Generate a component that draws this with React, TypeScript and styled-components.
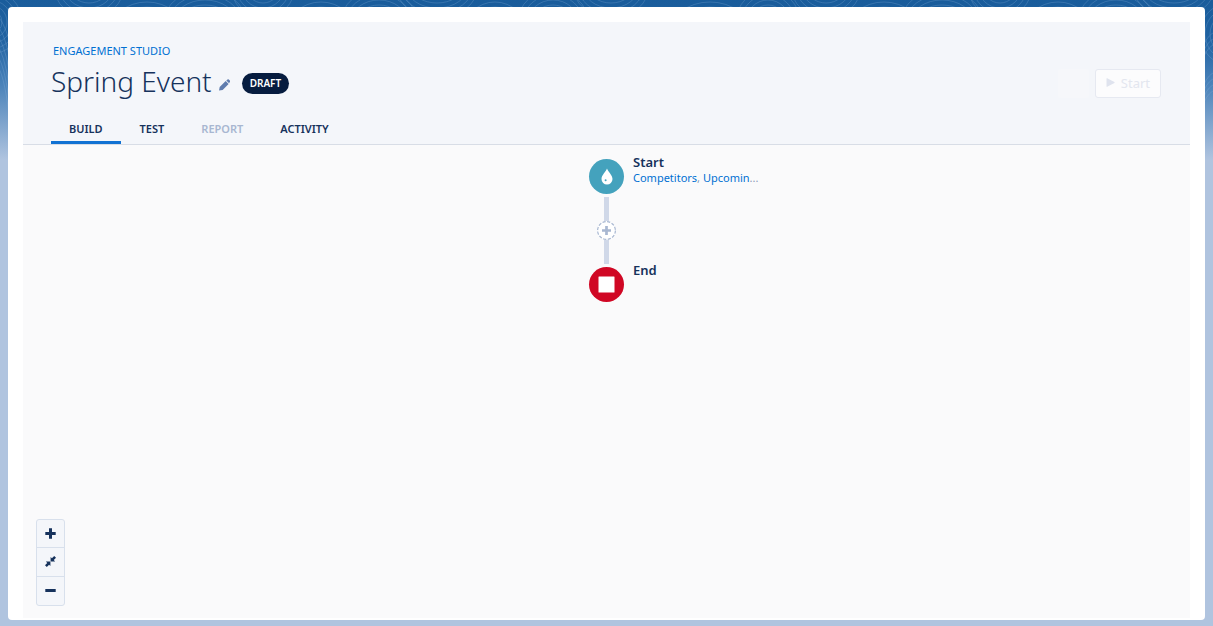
import React from "react";
import styled, { createGlobalStyle } from "styled-components";

const GlobalStyle = createGlobalStyle`
  *, *::before, *::after { box-sizing: border-box; }
  body {
    margin: 0;
    font-family: "Noto Sans", "Open Sans", sans-serif;
    font-size: 12px;
    color: #16325c;
    background: #b0c4df;
  }
  button { font: inherit; color: inherit; }
`;

const Shell = styled.div`
  position: relative;
  display: flex;
  min-height: 100vh;
  padding: 7px 8px 6px;
  background: linear-gradient(#195c9b 0, #2163a2 40px, #4b83ba 85px, #b0c4df 160px);
`;

const Contours = styled.svg`
  position: absolute;
  inset: 0;
  width: 100%;
  height: 160px;
  fill: none;
  stroke: #8fb6de;
  stroke-opacity: 0.25;
`;

const Card = styled.main`
  position: relative;
  flex: 1;
  display: flex;
  padding: 15px 15px 2px;
  background: #fff;
  border-radius: 4px;
`;

const Panel = styled.div`
  flex: 1;
  display: flex;
  flex-direction: column;
  background: #fafafb;
`;

const Header = styled.header`
  padding: 20px 28px 0;
  background: #f4f6fa;
  border-bottom: 1px solid #d8dde6;
`;

const HeaderRow = styled.div`
  display: flex;
  justify-content: space-between;
  align-items: flex-end;
`;

const Crumb = styled.a`
  display: block;
  padding-left: 2px;
  font-size: 11px;
  line-height: 18px;
  color: #0070d2;
  text-decoration: none;
`;

const TitleRow = styled.div`
  display: flex;
  align-items: center;
  height: 46px;
`;

const Title = styled.h1`
  margin: 0;
  padding-bottom: 4px;
  font-size: 28px;
  font-weight: 300;
  line-height: 42px;
`;

const EditButton = styled.button`
  display: flex;
  margin: 4px 12px 0 7px;
  padding: 0;
  border: 0;
  background: none;
`;

const Badge = styled.span`
  padding: 0 8px;
  border-radius: 11px;
  font-size: 10px;
  font-weight: 600;
  line-height: 21px;
  color: #fff;
  background: #061c3f;
`;

const Actions = styled.div`
  display: flex;
  gap: 6px;
  margin: 0 1px 8px 0;
`;

const SettingsButton = styled.button`
  width: 31px;
  height: 29px;
  padding: 0;
  border: 0;
  border-radius: 3px;
  background: #f6f7fa;
`;

const StartButton = styled.button`
  display: flex;
  align-items: center;
  gap: 6px;
  height: 29px;
  padding: 0 10px 2px;
  border: 1px solid #e6e9f1;
  border-radius: 3px;
  font-size: 13px;
  color: #e3e6ef;
  background: #fcfcfd;
`;

const Tabs = styled.nav`
  display: flex;
  gap: 1px;
  margin-top: 2px;
`;

const Tab = styled.button<{ $active?: boolean }>`
  height: 36px;
  padding: 8px 18px 0;
  border: 0;
  border-bottom: 3px solid ${(p) => (p.$active ? "#1172d3" : "transparent")};
  font-size: 11px;
  font-weight: 600;
  background: none;
  &:disabled { color: #a8b7d1; }
`;

const Canvas = styled.section`
  position: relative;
  flex: 1;
  padding: 14px 28px;
`;

const Flow = styled.div`
  display: grid;
  grid-template-columns: 1fr 35px 1fr;
  column-gap: 9px;
`;

const Disc = styled.div<{ $color: string }>`
  grid-column: 2;
  display: flex;
  align-items: center;
  justify-content: center;
  height: 35px;
  border-radius: 50%;
  background: ${(p) => p.$color};
`;

const StepText = styled.div`
  margin-top: -5px;
  line-height: 16px;
`;

const StepName = styled.h2`
  margin: 0;
  font-size: 13px;
  font-weight: 600;
  line-height: 16px;
`;

const StepLists = styled.div`
  font-size: 11px;
  white-space: nowrap;
  color: #8a9bb8;
  a { color: #0070d2; text-decoration: none; }
`;

const Link = styled.div`
  grid-column: 2;
  display: flex;
  flex-direction: column;
  align-items: center;
  height: 67px;
  margin: 3px 0;
`;

const Line = styled.span`
  flex: 1;
  width: 5px;
  background: #d0d8e8;
`;

const AddStep = styled.button`
  display: flex;
  width: 19px;
  height: 19px;
  padding: 0;
  border: 0;
  border-radius: 50%;
  background: #fff;
`;

const Zoom = styled.div`
  position: absolute;
  left: 13px;
  bottom: 12px;
  display: flex;
  flex-direction: column;
  width: 29px;
  border: 1px solid #d8e0ec;
  border-radius: 3px;
  background: #f4f6fa;
`;

const ZoomButton = styled.button`
  display: flex;
  align-items: center;
  justify-content: center;
  height: 27px;
  padding: 0 0 1px;
  border: 0;
  background: none;
  & + & { height: 29px; border-top: 1px solid #d8e0ec; }
`;

const rings = Array.from({ length: 22 }, (_, i) => ({
  x: i * 62 + ((i * 37) % 41) - 10,
  y: i % 3 === 0 ? 22 : i % 3 === 1 ? -14 : 34,
}));

function Background() {
  return (
    <Contours aria-hidden="true">
      {rings.map((c, i) =>
        [12, 17, 22, 27, 32].map((r) => (
          <ellipse key={`${i}-${r}`} cx={c.x} cy={c.y} rx={r + (i % 4) * 3} ry={r} />
        ))
      )}
      {[0, 5, 10, 15, 20, 25].map((d) => (
        <path key={d} d={`M-4 ${14 + d * 2} Q4 ${22 + d * 2} 9 ${40 + d * 3}`} />
      ))}
      <svg x="100%" overflow="visible">
        {[0, 6, 12, 40, 46, 52, 58].map((d) => (
          <path key={d} d={`M-9 ${44 + d} Q-4 ${34 + d} 2 ${32 + d}`} />
        ))}
      </svg>
    </Contours>
  );
}

export default function App() {
  return (
    <>
      <GlobalStyle />
      <Shell>
        <Background />
        <Card>
          <Panel>
            <Header>
              <HeaderRow>
                <div>
                  <Crumb href="#studio">ENGAGEMENT STUDIO</Crumb>
                  <TitleRow>
                    <Title>Spring Event</Title>
                    <EditButton aria-label="Edit name">
                      <svg width="11" height="12" viewBox="0 0 11 12" fill="#5f7cae">
                        <path d="M0 11.6 .7 8 6.7 2 9.6 4.9 3.6 10.9z" />
                        <path d="M7.3 1.5 8.5.4Q9.2 0 9.8.5L10.8 1.5Q11.4 2.3 10.8 2.9L10.1 4.2z" />
                      </svg>
                    </EditButton>
                    <Badge>DRAFT</Badge>
                  </TitleRow>
                </div>
                <Actions>
                  <SettingsButton disabled aria-label="Settings" />
                  <StartButton disabled>
                    <svg width="9" height="9" viewBox="0 0 9 9" fill="#dfe3ee">
                      <path d="M0.5 0.8Q0.5 0 1.2 0.3L8.4 4Q9 4.5 8.4 5L1.2 8.7Q0.5 9 0.5 8.2z" />
                    </svg>
                    Start
                  </StartButton>
                </Actions>
              </HeaderRow>
              <Tabs>
                <Tab $active>BUILD</Tab>
                <Tab>TEST</Tab>
                <Tab disabled>REPORT</Tab>
                <Tab>ACTIVITY</Tab>
              </Tabs>
            </Header>
            <Canvas>
              <Flow>
                <Disc $color="#44a2bd">
                  <svg width="12" height="17" viewBox="0 0 12 17">
                    <path fill="#fff" d="M6 0.5C6.7 3.4 11.5 7 11.5 11A5.5 5.5 0 0 1 .5 11C.5 7 5.3 3.4 6 .5z" />
                    <circle cx="4.6" cy="12.2" r="1" fill="#44a2bd" />
                  </svg>
                </Disc>
                <StepText>
                  <StepName>Start</StepName>
                  <StepLists>
                    <a href="#competitors">Competitors</a>, <a href="#upcoming">Upcomin</a>...
                  </StepLists>
                </StepText>
                <Link>
                  <Line />
                  <AddStep aria-label="Add step">
                    <svg width="19" height="19" viewBox="0 0 19 19">
                      <circle cx="9.5" cy="9.5" r="8.9" fill="#fff" stroke="#a8b7d1" strokeWidth="1.2" strokeDasharray="3.2 1.5" />
                      <path d="M9.5 5V14M5 9.5H14" stroke="#a8b7d1" strokeWidth="2.7" />
                    </svg>
                  </AddStep>
                  <Line />
                </Link>
                <Disc $color="#d00724">
                  <svg width="17" height="17" viewBox="0 0 17 17">
                    <rect x="0.5" y="0.5" width="16" height="16" rx="0.5" fill="#fff" />
                  </svg>
                </Disc>
                <StepText>
                  <StepName>End</StepName>
                </StepText>
              </Flow>
              <Zoom>
                <ZoomButton aria-label="Zoom in">
                  <svg width="11" height="11" viewBox="0 0 11 11" stroke="#16325c" strokeWidth="3">
                    <path d="M5.5 .3V10.7M.3 5.5H10.7" />
                  </svg>
                </ZoomButton>
                <ZoomButton aria-label="Fit to screen">
                  <svg width="11" height="11" viewBox="0 0 11 11" fill="#16325c">
                    <path d="M5.6 .9 5.6 5.4 10.1 5.4 8.8 4.1 11 1.8 9.2 0 6.9 2.2z" />
                    <path d="M5.4 5.6 5.4 10.1 4.1 8.8 1.8 11 0 9.2 2.2 6.9.9 5.6z" />
                  </svg>
                </ZoomButton>
                <ZoomButton aria-label="Zoom out">
                  <svg width="11" height="11" viewBox="0 0 11 11" stroke="#16325c" strokeWidth="3">
                    <path d="M.3 5.5H10.7" />
                  </svg>
                </ZoomButton>
              </Zoom>
            </Canvas>
          </Panel>
        </Card>
      </Shell>
    </>
  );
}
